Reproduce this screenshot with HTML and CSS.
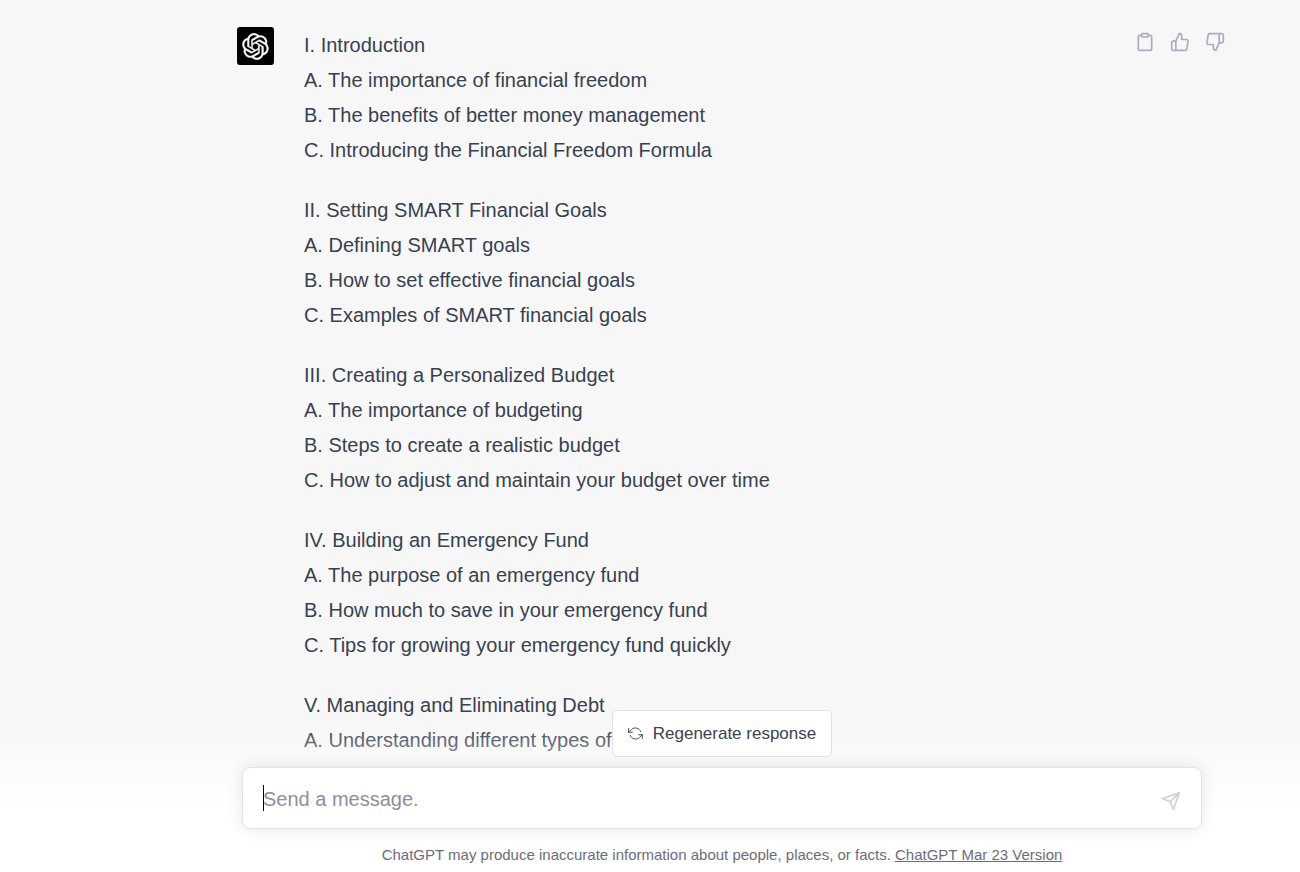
FILE: index.html
```html
<!DOCTYPE html>
<html lang="en">
<head>
<meta charset="utf-8">
<meta name="viewport" content="width=device-width, initial-scale=1">
<title>ChatGPT</title>
<link rel="stylesheet" href="styles.css">
</head>
<body>
<div class="app">
  <main class="thread">
    <article class="message">
      <div class="avatar">
        <svg class="logo" viewBox="0 0 41 41" fill="currentColor" role="img" aria-label="ChatGPT"><path d="M37.5324 16.8707C37.9808 15.5241 38.1363 14.0974 37.9886 12.6859C37.8409 11.2744 37.3934 9.91076 36.676 8.68622C35.6126 6.83404 33.9882 5.3676 32.0373 4.4985C30.0864 3.62941 27.9098 3.40259 25.8215 3.85078C24.8796 2.7893 23.7219 1.94125 22.4257 1.36341C21.1295 0.785575 19.7249 0.491269 18.3058 0.500197C16.1708 0.495044 14.0893 1.16803 12.3614 2.42214C10.6335 3.67624 9.34853 5.44666 8.6917 7.47815C7.30085 7.76286 5.98686 8.3414 4.8377 9.17505C3.68854 10.0087 2.73073 11.0782 2.02839 12.312C0.956464 14.1591 0.498905 16.2988 0.721698 18.4228C0.944492 20.5467 1.83612 22.5449 3.268 24.1293C2.81966 25.4759 2.66413 26.9026 2.81182 28.3141C2.95951 29.7256 3.40701 31.0892 4.12437 32.3138C5.18791 34.1659 6.8123 35.6322 8.76321 36.5013C10.7141 37.3704 12.8907 37.5973 14.9789 37.1492C15.9208 38.2107 17.0786 39.0587 18.3747 39.6366C19.6709 40.2144 21.0755 40.5087 22.4946 40.4998C24.6307 40.5054 26.7133 39.8321 28.4418 38.5772C30.1704 37.3223 31.4556 35.5506 32.1119 33.5179C33.5027 33.2332 34.8167 32.6547 35.9659 31.821C37.115 30.9874 38.0728 29.9178 38.7752 28.684C39.8458 26.8371 40.3023 24.6979 40.0789 22.5748C39.8556 20.4517 38.9639 18.4544 37.5324 16.8707ZM22.4978 37.8849C20.7443 37.8874 19.0459 37.2733 17.6994 36.1501C17.7601 36.117 17.8666 36.0586 17.936 36.0161L25.9004 31.4156C26.1003 31.3019 26.2663 31.137 26.3813 30.9378C26.4964 30.7386 26.5563 30.5124 26.5549 30.2825V19.0542L29.9213 20.998C29.9389 21.0068 29.9541 21.0198 29.9656 21.0359C29.977 21.052 29.9842 21.0707 29.9867 21.0902V30.3889C29.9842 32.375 29.1946 34.2791 27.7909 35.6841C26.3872 37.0892 24.4838 37.8806 22.4978 37.8849ZM6.39227 31.0064C5.51397 29.4888 5.19742 27.7107 5.49804 25.9832C5.55718 26.0187 5.66048 26.0818 5.73461 26.1244L13.699 30.7248C13.8975 30.8408 14.1233 30.902 14.3532 30.902C14.583 30.902 14.8088 30.8408 15.0073 30.7248L24.731 25.1103V28.9979C24.7321 29.0177 24.7283 29.0376 24.7199 29.0556C24.7115 29.0736 24.6988 29.0893 24.6829 29.1012L16.6317 33.7497C14.9096 34.7416 12.8643 35.0097 10.9447 34.4954C9.02506 33.9811 7.38785 32.7263 6.39227 31.0064ZM4.29707 13.6194C5.17156 12.0998 6.55279 10.9364 8.19885 10.3327C8.19885 10.4013 8.19491 10.5228 8.19491 10.6071V19.808C8.19351 20.0378 8.25334 20.2638 8.36823 20.4629C8.48312 20.6619 8.64893 20.8267 8.84863 20.9404L18.5723 26.5542L15.206 28.4979C15.1894 28.5089 15.1703 28.5155 15.1505 28.5173C15.1307 28.5191 15.1107 28.516 15.0924 28.5082L7.04046 23.8557C5.32135 22.8601 4.06716 21.2235 3.55289 19.3046C3.03862 17.3858 3.30624 15.3413 4.29707 13.6194ZM31.955 20.0556L22.2312 14.4411L25.5976 12.4981C25.6142 12.4872 25.6333 12.4805 25.6531 12.4787C25.6729 12.4769 25.6928 12.4801 25.7111 12.4879L33.7631 17.1364C34.9967 17.849 36.0017 18.8982 36.6606 20.1613C37.3194 21.4244 37.6047 22.849 37.4832 24.2684C37.3617 25.6878 36.8382 27.0432 35.9743 28.1759C35.1103 29.3086 33.9415 30.1717 32.6047 30.6641C32.6047 30.5947 32.6047 30.4733 32.6047 30.3889V21.188C32.6066 20.9586 32.5474 20.7328 32.4332 20.5338C32.319 20.3348 32.154 20.1698 31.955 20.0556ZM35.3055 15.0128C35.2464 14.9765 35.1431 14.9142 35.069 14.8717L27.1045 10.2712C26.906 10.1554 26.6803 10.0943 26.4504 10.0943C26.2206 10.0943 25.9948 10.1554 25.7963 10.2712L16.0726 15.8858V11.9982C16.0715 11.9783 16.0753 11.9585 16.0837 11.9405C16.0921 11.9225 16.1048 11.9068 16.1207 11.8949L24.1719 7.25025C25.4053 6.53903 26.8158 6.19376 28.2383 6.25482C29.6608 6.31589 31.0364 6.78077 32.2044 7.59508C33.3723 8.40939 34.2842 9.53945 34.8334 10.8531C35.3826 12.1667 35.5464 13.6095 35.3055 15.0128ZM14.2424 21.9419L10.8752 19.9981C10.8576 19.9893 10.8423 19.9763 10.8309 19.9602C10.8195 19.9441 10.8122 19.9254 10.8098 19.9058V10.6071C10.8107 9.18295 11.2173 7.78848 11.9819 6.58696C12.7466 5.38544 13.8377 4.42659 15.1275 3.82264C16.4173 3.21869 17.8524 2.99464 19.2649 3.1767C20.6775 3.35876 22.0089 3.93941 23.1034 4.85067C23.0427 4.88379 22.937 4.94215 22.8668 4.98473L14.9024 9.58517C14.7025 9.69878 14.5366 9.86356 14.4215 10.0626C14.3065 10.2616 14.2466 10.4877 14.2479 10.7175L14.2424 21.9419ZM16.071 17.9991L20.4018 15.4978L24.7325 17.9975V22.9985L20.4018 25.4983L16.071 22.9985V17.9991Z"/></svg>
      </div>
      <div class="prose">
        <p>I. Introduction<br>A. The importance of financial freedom<br>B. The benefits of better money management<br>C. Introducing the Financial Freedom Formula</p>
        <p>II. Setting SMART Financial Goals<br>A. Defining SMART goals<br>B. How to set effective financial goals<br>C. Examples of SMART financial goals</p>
        <p>III. Creating a Personalized Budget<br>A. The importance of budgeting<br>B. Steps to create a realistic budget<br>C. How to adjust and maintain your budget over time</p>
        <p>IV. Building an Emergency Fund<br>A. The purpose of an emergency fund<br>B. How much to save in your emergency fund<br>C. Tips for growing your emergency fund quickly</p>
        <p>V. Managing and Eliminating Debt<br>A. Understanding different types of debt</p>
      </div>
      <div class="actions">
        <button class="icon-button" type="button" aria-label="Copy"><svg class="icon" viewBox="0 0 24 24"><path d="M16 4h2a2 2 0 0 1 2 2v14a2 2 0 0 1-2 2H6a2 2 0 0 1-2-2V6a2 2 0 0 1 2-2h2"/><rect x="8" y="2" width="8" height="4" rx="1"/></svg></button>
        <button class="icon-button" type="button" aria-label="Good response"><svg class="icon" viewBox="0 0 24 24"><path d="M14 9V5a3 3 0 0 0-3-3l-4 9v11h11.28a2 2 0 0 0 2-1.7l1.38-9a2 2 0 0 0-2-2.3zM7 22H4a2 2 0 0 1-2-2v-7a2 2 0 0 1 2-2h3"/></svg></button>
        <button class="icon-button" type="button" aria-label="Bad response"><svg class="icon" viewBox="0 0 24 24"><path d="M10 15v4a3 3 0 0 0 3 3l4-9V2H5.72a2 2 0 0 0-2 1.7l-1.38 9a2 2 0 0 0 2 2.3zm7-13h2.67A2.31 2.31 0 0 1 22 4v7a2.31 2.31 0 0 1-2.33 2H17"/></svg></button>
      </div>
    </article>
  </main>
  <footer class="dock">
    <button class="regenerate" type="button">
      <svg class="icon icon-small" viewBox="0 0 24 24"><path d="M1 4v6h6M23 20v-6h-6"/><path d="M20.49 9A9 9 0 0 0 5.64 5.64L1 10m22 4l-4.64 4.36A9 9 0 0 1 3.51 15"/></svg>
      Regenerate response
    </button>
    <form class="composer">
      <input class="prompt" type="text" placeholder="Send a message." aria-label="Message">
      <button class="icon-button send" type="button" aria-label="Send"><svg class="icon" viewBox="0 0 24 24"><path d="M22 2L11 13M22 2l-7 20-4-9-9-4z"/></svg></button>
    </form>
    <p class="notice">ChatGPT may produce inaccurate information about people, places, or facts. <a href="#">ChatGPT Mar 23 Version</a></p>
  </footer>
</div>
</body>
</html>
```

FILE: styles.css
```css
* {
  box-sizing: border-box;
}

body {
  margin: 0;
  background: #fff;
  font-family: "Liberation Sans", Arial, sans-serif;
}

button,
input {
  font: inherit;
}

.app {
  position: relative;
  height: 100vh;
  overflow: hidden;
}

.thread {
  min-height: 100%;
  background: #f7f7f8;
}

.message {
  display: flex;
  align-items: flex-start;
  padding: 27px 75px 0 237px;
}

.avatar {
  display: grid;
  place-items: center;
  width: 37px;
  height: 38px;
  margin-right: 30px;
  border-radius: 3px;
  background: #000;
  color: #fff;
}

.logo {
  width: 27px;
  height: 27px;
  stroke: currentColor;
  stroke-width: 0.6;
}

.prose {
  flex: 1;
  padding-top: 1px;
  color: #374151;
  font-size: 20px;
  line-height: 35px;
}

.prose p {
  margin: 0 0 25px;
}

.actions {
  display: flex;
  gap: 15px;
  padding-top: 5px;
  color: #acacbe;
}

.icon-button {
  display: block;
  padding: 0;
  border: 0;
  background: none;
  color: inherit;
}

.icon {
  display: block;
  width: 20px;
  height: 20px;
  fill: none;
  stroke: currentColor;
  stroke-width: 2;
  stroke-linecap: round;
  stroke-linejoin: round;
}

.icon-small {
  width: 15px;
  height: 15px;
  stroke-width: 1.5;
}

.dock {
  position: absolute;
  right: 0;
  bottom: 0;
  left: 0;
  display: flex;
  flex-direction: column;
  align-items: center;
  padding: 0 98px 7px 242px;
  background: linear-gradient(to bottom, rgba(255, 255, 255, 0) 8%, #fff 60%);
}

.regenerate {
  display: flex;
  align-items: center;
  gap: 10px;
  height: 47px;
  margin-bottom: 10px;
  padding: 0 15px;
  border: 1px solid #e3e3e6;
  border-radius: 5px;
  background: #fff;
  color: #40414f;
  font-size: 17px;
}

.composer {
  display: flex;
  align-items: center;
  width: 100%;
  height: 62px;
  padding: 0 20px;
  border: 1px solid #e2e2e3;
  border-radius: 8px;
  background: #fff;
  box-shadow: 0 0 16px rgba(0, 0, 0, 0.1);
}

.prompt {
  flex: 1;
  height: 26px;
  padding: 2px 0 0;
  border: 0;
  outline: 0;
  background: linear-gradient(#000, #000) left / 1px 100% no-repeat;
  font-size: 20px;
}

.prompt::placeholder {
  color: #8e8ea0;
  opacity: 1;
}

.send {
  padding-top: 5px;
  color: #cfcfd9;
}

.notice {
  margin: 0;
  padding-top: 16px;
  color: #6b6c7b;
  font-size: 15px;
  line-height: 20px;
}

.notice a {
  color: inherit;
}
```
